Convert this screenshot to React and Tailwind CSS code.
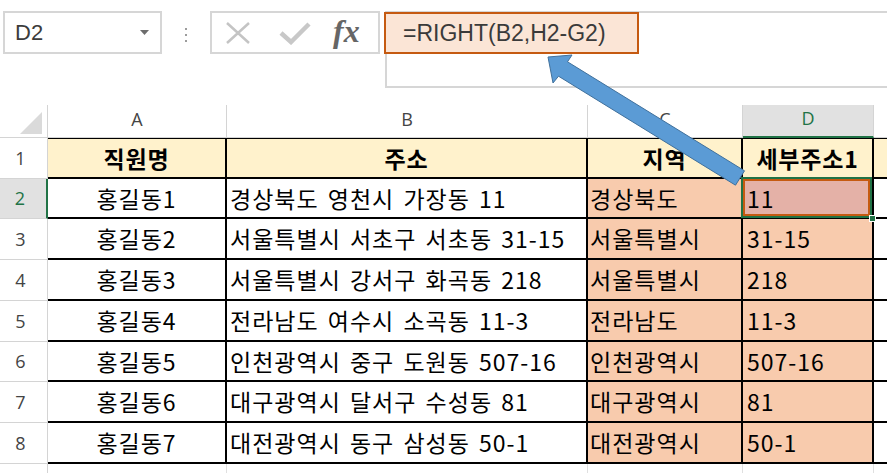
import React from 'react';

const rows = [
  { h: 'h-[40px]', name: '홍길동1', addr: '경상북도 영천시 가장동 11', region: '경상북도', detail: '11', active: true },
  { h: 'h-[41px]', name: '홍길동2', addr: '서울특별시 서초구 서초동 31-15', region: '서울특별시', detail: '31-15' },
  { h: 'h-[41px]', name: '홍길동3', addr: '서울특별시 강서구 화곡동 218', region: '서울특별시', detail: '218' },
  { h: 'h-[41px]', name: '홍길동4', addr: '전라남도 여수시 소곡동 11-3', region: '전라남도', detail: '11-3' },
  { h: 'h-[40px]', name: '홍길동5', addr: '인천광역시 중구 도원동 507-16', region: '인천광역시', detail: '507-16' },
  { h: 'h-[41px]', name: '홍길동6', addr: '대구광역시 달서구 수성동 81', region: '대구광역시', detail: '81' },
  { h: 'h-[41px]', name: '홍길동7', addr: '대전광역시 동구 삼성동 50-1', region: '대전광역시', detail: '50-1' },
];

const cell = 'flex items-center border-r-2 border-b-2 border-black';

const App = () => {
  return (
    <div className="relative w-[887px] h-[473px] overflow-hidden bg-white font-['Noto_Sans_CJK_KR',sans-serif] text-black">
      {/* formula bar */}
      <div className="flex h-[105px] pt-[11px]">
        <div className="ml-[3px] flex h-[43px] w-[159px] items-center justify-between border-2 border-[#d6d6d6] pl-[10px] pr-[11px]">
          <span className="font-['Liberation_Sans',sans-serif] text-[22px] leading-none text-[#3c3c3c]">D2</span>
          <svg width="9" height="5" viewBox="0 0 9 5"><path d="M0 0h9L4.5 5z" fill="#6d6d6d" /></svg>
        </div>
        <div className="flex w-[48px] flex-col items-center gap-[4px] pt-[17px]">
          <div className="h-[2px] w-[2px] bg-[#9c9c9c]"></div>
          <div className="h-[2px] w-[2px] bg-[#9c9c9c]"></div>
          <div className="h-[2px] w-[2px] bg-[#9c9c9c]"></div>
        </div>
        <div className="flex h-[43px] w-[170px] items-center border-2 border-[#d6d6d6] pl-[13px]">
          <svg width="26" height="22" viewBox="0 0 26 22">
            <path d="M2 1L24 21M24 1L2 21" stroke="#c4c4c4" strokeWidth="2.5" fill="none" />
          </svg>
          <svg className="ml-[28px]" width="32" height="24" viewBox="0 0 32 24">
            <path d="M2 12L12 21L30 3" stroke="#c8c8c8" strokeWidth="4.5" fill="none" />
          </svg>
          <span className="ml-[22px] -mt-[4px] font-['Liberation_Serif',serif] text-[32px] font-bold italic leading-none text-[#666]">fx</span>
        </div>
        <div className="ml-[5px] h-[77px] flex-1 border-y-2 border-l-2 border-[#d6d6d6]">
          <div className="-ml-[3px] -mt-[1px] flex h-[42px] w-[255px] items-center border-2 border-[#c55a11] bg-[#fbe5d6] pl-[17px] font-['Liberation_Sans',sans-serif] text-[23px] text-[#3a3a3a]">
            =RIGHT(B2,H2-G2)
          </div>
        </div>
      </div>

      {/* column headers */}
      <div className="flex h-[33px] font-['Open_Sans',sans-serif] text-[18px] text-[#444]">
        <div className="relative w-[48px] border-r border-b border-[#d4d4d4]">
          <svg className="absolute left-[20px] top-[7px]" width="22" height="22" viewBox="0 0 22 22">
            <path d="M0 22H22V0z" fill="#dadada" />
          </svg>
        </div>
        <div className="flex w-[179px] items-center justify-center border-r border-b border-[#d4d4d4] pb-[4px]">A</div>
        <div className="flex w-[361px] items-center justify-center border-r border-b border-[#d4d4d4] pb-[4px]">B</div>
        <div className="flex w-[155px] items-center justify-center border-r border-b border-[#d4d4d4] pb-[4px]">C</div>
        <div className="flex w-[131px] items-center justify-center border-r border-[#d4d4d4] border-b-2 border-b-[#217346] bg-[#e1e1e1] pb-[4px] text-[#217346]">D</div>
        <div className="flex-1 border-b border-[#d4d4d4]"></div>
      </div>

      {/* header row 1 */}
      <div className="flex h-[41px] text-[23px] font-bold tracking-[0.8px]">
        <div className="flex w-[48px] items-end justify-center border-r border-b border-[#d4d4d4] pb-[6px] pr-[6px] font-['Open_Sans',sans-serif] text-[18px] font-normal tracking-normal text-[#444]">1</div>
        <div className={`${cell} w-[179px] justify-center border-t border-t-black bg-[#fff2cc]`}>직원명</div>
        <div className={`${cell} w-[361px] justify-center border-t border-t-black bg-[#fff2cc]`}>주소</div>
        <div className={`${cell} w-[155px] justify-center border-t border-t-black bg-[#fff2cc]`}>지역</div>
        <div className={`${cell} w-[131px] justify-center border-t border-t-black bg-[#fff2cc]`}>세부주소1</div>
        <div className="flex-1 border-t border-b-2 border-black bg-[#fff2cc]"></div>
      </div>

      {/* data rows */}
      {rows.map((r, i) => (
        <div key={i} className={`flex ${r.h} text-[23px] tracking-[1px] [word-spacing:3px]`}>
          <div
            className={`flex w-[48px] items-end justify-center border-b border-[#d4d4d4] pb-[6px] pr-[6px] font-['Open_Sans',sans-serif] text-[18px] tracking-normal [word-spacing:0px] ${
              r.active ? 'border-r-2 border-r-[#217346] bg-[#e1e1e1] text-[#217346]' : 'border-r text-[#444]'
            }`}
          >
            {i + 2}
          </div>
          <div className={`${cell} w-[179px] justify-center`}>{r.name}</div>
          <div className={`${cell} w-[361px] pl-[3px]`}>{r.addr}</div>
          <div className={`${cell} w-[155px] bg-[#f8cbad] pl-[2px]`}>{r.region}</div>
          {r.active ? (
            <div className={`${cell} relative w-[131px] bg-[#e4b1a7] pl-[4px]`}>
              {r.detail}
              <div className="absolute -left-[2px] -top-[2px] -right-[0px] -bottom-[1px] border-2 border-[#217346]"></div>
              <div className="absolute left-0 top-0 right-[2px] bottom-[1px] border-2 border-[#c55a11]"></div>
              <div className="absolute -right-[4px] -bottom-[5px] h-[7px] w-[7px] border border-white bg-[#217346]"></div>
            </div>
          ) : (
            <div className={`${cell} w-[131px] bg-[#f8cbad] pl-[4px]`}>{r.detail}</div>
          )}
          <div className="flex-1 border-b-2 border-black"></div>
        </div>
      ))}

      {/* row 9 partial */}
      <div className="flex h-[20px]">
        <div className="w-[48px] border-r border-[#d4d4d4]"></div>
        <div className="w-[179px] border-r border-[#e0e0e0]"></div>
        <div className="w-[361px] border-r border-[#e0e0e0]"></div>
        <div className="w-[155px] border-r border-[#e0e0e0]"></div>
        <div className="w-[131px] border-r border-[#e0e0e0]"></div>
        <div className="flex-1"></div>
      </div>

      {/* arrow callout */}
      <svg className="pointer-events-none absolute left-0 top-0" width="887" height="473" viewBox="0 0 887 473">
        <polygon
          points="548,57 572,55 567.5,61.8 744.5,170.8 735.5,185.2 558.5,76.2 553,83"
          fill="#5b9bd5"
          stroke="#41719c"
          strokeWidth="1"
          strokeLinejoin="miter"
        />
      </svg>
    </div>
  );
};

export default App;
